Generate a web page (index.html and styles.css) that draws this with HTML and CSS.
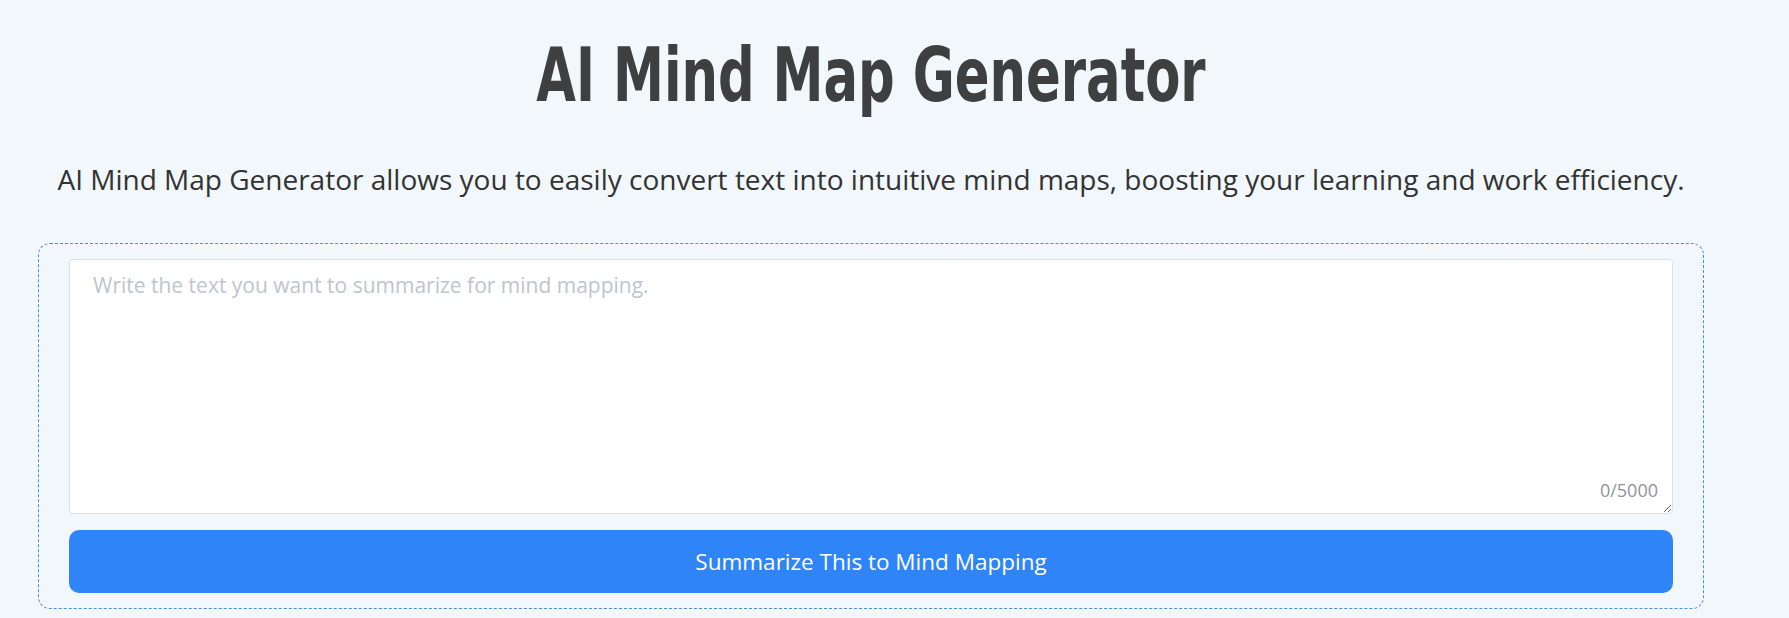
FILE: index.html
```html
<!DOCTYPE html>
<html lang="en">
<head>
    <meta charset="UTF-8">
    <meta name="viewport" content="width=device-width, initial-scale=1.0">
    <title>AI Mind Map Generator</title>
    <link rel="stylesheet" href="styles.css">
</head>
<body>
    <div class="container">
        <h1 class="title">AI Mind Map Generator</h1>
        <p class="subtitle">AI Mind Map Generator allows you to easily convert text into intuitive mind maps, boosting your learning and work efficiency.</p>

        <div class="generator">
            <div class="text-box">
                <textarea id="sourceText" maxlength="5000" placeholder="Write the text you want to summarize for mind mapping."></textarea>
                <span class="word-limit" id="wordLimit">0/5000</span>
            </div>
            <button class="submit-btn">Summarize This to Mind Mapping</button>
        </div>
    </div>

    <script>
        // счётчик символов под текстом
        const sourceText = document.getElementById('sourceText');
        sourceText.addEventListener('input', function() {
            document.getElementById('wordLimit').textContent = sourceText.value.length + '/5000';
        });
    </script>
</body>
</html>
```

FILE: styles.css
```css
body {
    font-family: 'Open Sans', 'Liberation Sans', sans-serif;
    background-color: #f1f7fa;
    color: #333;
    margin: 0;
}
.container {
    width: 1666px;
    margin-left: 38px;
}
.title {
    font-family: 'DejaVu Sans Condensed', 'DejaVu Sans', sans-serif;
    font-stretch: condensed;
    font-weight: bold;
    font-size: 74px;
    line-height: 74px;
    color: #3d3f41;
    text-align: center;
    margin: 38px 0 0;
    /* шрифт шире нужного, поджимаем по горизонтали */
    transform: scaleX(0.77);
}
.subtitle {
    font-size: 28px;
    line-height: 38px;
    text-align: center;
    color: #333;
    margin: 48px 0 0;
}
.generator {
    margin-top: 45px;
    border: 1px dashed #4a8fd4;
    border-radius: 12px;
    padding: 15px 30px;
}
.text-box {
    position: relative;
}
.text-box textarea {
    display: block;
    width: 100%;
    height: 255px;
    box-sizing: border-box;
    padding: 10px 23px;
    font-family: 'Open Sans', sans-serif;
    font-size: 21px;
    line-height: 30px;
    color: #606266;
    background-color: #fff;
    border: 1px solid #dcdfe6;
    border-radius: 4px;
    outline: none;
}
.text-box textarea::placeholder {
    color: #c0c4cc;
}
.word-limit {
    position: absolute;
    right: 15px;
    bottom: 15px;
    font-size: 18px;
    line-height: 18px;
    color: #909399;
}
.submit-btn {
    display: block;
    width: 100%;
    height: 63px;
    margin-top: 16px;
    background-color: #2f85f7;
    color: #fff;
    border: none;
    border-radius: 10px;
    font-family: 'Open Sans', sans-serif;
    font-size: 22.5px;
    cursor: pointer;
}
```
